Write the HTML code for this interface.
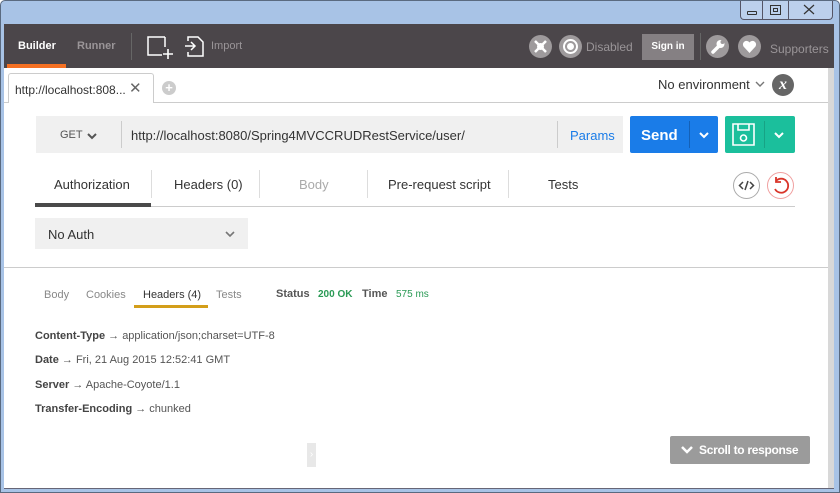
<!DOCTYPE html>
<html><head><meta charset="utf-8"><style>
*{box-sizing:border-box;margin:0;padding:0}
body{width:840px;height:493px;overflow:hidden;font-family:"Liberation Sans",sans-serif;background:#fff;position:relative}
.a{position:absolute;white-space:nowrap}
</style></head><body>
<div class="a" style="left:0;top:0;width:840px;height:493px;background:#a8c3e6;border:1px solid #5a6a80;border-radius:5px 5px 0 0"></div>
<div class="a" style="left:4px;top:24px;width:830px;height:465px;background:#fff;border-bottom:1px solid #667"></div>
<div class="a" style="left:828px;top:68px;width:6px;height:420px;background:#d8d8d8"></div>
<div class="a" style="left:740px;top:1px;width:93px;height:19px;border:1px solid #556;border-top:none;border-radius:0 0 4px 4px;background:#bcd0ec"></div>
<div class="a" style="left:762px;top:1px;width:1px;height:18px;background:#556"></div>
<div class="a" style="left:788px;top:1px;width:1px;height:18px;background:#556"></div>
<div class="a" style="left:747px;top:11px;width:10px;height:4px;border:1px solid #333;border-radius:1px"></div>
<div class="a" style="left:770px;top:5px;width:11px;height:10px;border:1px solid #333"></div>
<div class="a" style="left:773px;top:8px;width:5px;height:4px;border:1px solid #333"></div>
<svg class="a" style="left:803px;top:4px" width="12" height="11"><path d="M1 1l10 9M11 1L1 10" stroke="#333" stroke-width="1.2"/></svg>
<div class="a" style="left:4px;top:24px;width:830px;height:44px;background:#4b464a"></div>
<div class="a" style="left:18px;top:40px;font-size:11px;font-weight:bold;color:#fff">Builder</div>
<div class="a" style="left:77px;top:40px;font-size:11px;font-weight:bold;color:#9a9598">Runner</div>
<div class="a" style="left:7px;top:64px;width:59px;height:4px;background:#f47023"></div>
<div class="a" style="left:131px;top:33px;width:1px;height:27px;background:#666"></div>
<svg class="a" style="left:145px;top:34px" width="30" height="28"><path d="M20 3H3v18h14M20 3v10" fill="none" stroke="#fff" stroke-width="1.5"/><path d="M23 15v10M18 20h10" stroke="#fff" stroke-width="1.6"/></svg>
<svg class="a" style="left:184px;top:34px" width="22" height="26"><path d="M4 7V3h10l5 5v14H4v-4" fill="none" stroke="#fff" stroke-width="1.5"/><path d="M1 12h9M7 8l4 4-4 4" fill="none" stroke="#fff" stroke-width="1.5"/></svg>
<div class="a" style="left:211px;top:40px;font-size:11px;color:#9a9598">Import</div>
<div class="a" style="left:529px;top:35px;width:23px;height:23px;border-radius:50%;background:#9e9a9c"></div>
<svg class="a" style="left:529px;top:35px" width="23" height="23"><circle cx="11.5" cy="11.5" r="3.5" fill="#fff"/><path d="M6 6l11 11M17 6L6 17" stroke="#fff" stroke-width="2.5"/></svg>
<div class="a" style="left:559px;top:35px;width:23px;height:23px;border-radius:50%;background:#9e9a9c"></div>
<div class="a" style="left:563px;top:39px;width:15px;height:15px;border-radius:50%;border:2px solid #fff"></div>
<div class="a" style="left:567px;top:43px;width:7px;height:7px;border-radius:50%;background:#fff"></div>
<div class="a" style="left:586px;top:40px;font-size:12px;color:#9a9598">Disabled</div>
<div class="a" style="left:642px;top:34px;width:52px;height:26px;background:#858083;color:#fff;font-size:10px;font-weight:bold;text-align:center;line-height:26px">Sign in</div>
<div class="a" style="left:700px;top:33px;width:1px;height:27px;background:#666"></div>
<div class="a" style="left:706px;top:35px;width:23px;height:23px;border-radius:50%;background:#9e9a9c"></div>
<svg class="a" style="left:706px;top:35px" width="23" height="23"><path d="M7 17l6-6" stroke="#fff" stroke-width="3.5" stroke-linecap="round"/><circle cx="14.5" cy="9" r="4" fill="#fff"/><circle cx="16.5" cy="7" r="2" fill="#9e9a9c"/></svg>
<div class="a" style="left:738px;top:35px;width:23px;height:23px;border-radius:50%;background:#9e9a9c"></div>
<svg class="a" style="left:738px;top:35px" width="23" height="23"><path d="M11.5 18L5.5 11.5a3.3 3.3 0 0 1 6-4 3.3 3.3 0 0 1 6 4z" fill="#fff"/></svg>
<div class="a" style="left:770px;top:42px;font-size:12px;color:#9a9598">Supporters</div>
<div class="a" style="left:4px;top:102px;width:824px;height:1px;background:#ccc"></div>
<div class="a" style="left:8px;top:73px;width:146px;height:30px;background:#fff;border:1px solid #ccc;border-bottom:none;border-radius:3px 3px 0 0"></div>
<div class="a" style="left:15px;top:83px;font-size:12px;color:#333">http://localhost:808...</div>
<div class="a" style="left:129px;top:79px;font-size:15px;color:#666">✕</div>
<div class="a" style="left:162px;top:81px;width:14px;height:14px;border-radius:50%;background:#ccc;color:#fff;font-size:13px;font-weight:bold;text-align:center;line-height:14px">+</div>
<div class="a" style="left:658px;top:77px;font-size:13px;color:#333">No environment</div>
<svg class="a" style="left:755px;top:81px" width="10" height="7"><path d="M1 1l4 4 4-4" fill="none" stroke="#777" stroke-width="1.4"/></svg>
<div class="a" style="left:772px;top:74px;width:22px;height:22px;border-radius:50%;background:#666;color:#fff;font-family:'Liberation Serif',serif;font-style:italic;font-weight:bold;font-size:16px;text-align:center;line-height:21px">x</div>
<div class="a" style="left:36px;top:116px;width:587px;height:37px;background:#f0f0f0"></div>
<div class="a" style="left:60px;top:129px;font-size:11px;color:#555">GET</div>
<svg class="a" style="left:86px;top:132px" width="12" height="8"><path d="M2 2l4 4 4-4" fill="none" stroke="#555" stroke-width="2"/></svg>
<div class="a" style="left:121px;top:121px;width:1px;height:27px;background:#ccc"></div>
<div class="a" style="left:131px;top:128px;font-size:13px;color:#333">http://localhost:8080/Spring4MVCCRUDRestService/user/</div>
<div class="a" style="left:557px;top:121px;width:1px;height:27px;background:#ccc"></div>
<div class="a" style="left:570px;top:128px;font-size:13px;color:#1a7ce8">Params</div>
<div class="a" style="left:630px;top:116px;width:88px;height:37px;background:#1a7ce8;border-radius:2px"></div>
<div class="a" style="left:641px;top:127px;font-size:15px;font-weight:bold;color:#fff">Send</div>
<div class="a" style="left:689px;top:121px;width:1px;height:27px;background:#1461b8"></div>
<svg class="a" style="left:698px;top:131px" width="12" height="8"><path d="M2 2l4 4 4-4" fill="none" stroke="#fff" stroke-width="2"/></svg>
<div class="a" style="left:725px;top:116px;width:70px;height:37px;background:#1bbf9c;border-radius:2px"></div>
<svg class="a" style="left:731px;top:122px" width="25" height="25"><path d="M2 2h21v21H2z" fill="none" stroke="#fff" stroke-width="1.6"/><path d="M7 2v6h11V2" fill="none" stroke="#fff" stroke-width="1.6"/><circle cx="12.5" cy="16" r="3" fill="none" stroke="#fff" stroke-width="1.6"/></svg>
<div class="a" style="left:764px;top:121px;width:1px;height:27px;background:#17a385"></div>
<svg class="a" style="left:773px;top:131px" width="12" height="8"><path d="M2 2l4 4 4-4" fill="none" stroke="#fff" stroke-width="2"/></svg>
<div class="a" style="left:54px;top:177px;font-size:13px;color:#333">Authorization</div>
<div class="a" style="left:151px;top:170px;width:1px;height:28px;background:#ddd"></div>
<div class="a" style="left:174px;top:177px;font-size:13px;color:#333">Headers (0)</div>
<div class="a" style="left:259px;top:170px;width:1px;height:28px;background:#ddd"></div>
<div class="a" style="left:299px;top:177px;font-size:13px;color:#aaa">Body</div>
<div class="a" style="left:367px;top:170px;width:1px;height:28px;background:#ddd"></div>
<div class="a" style="left:388px;top:177px;font-size:13px;color:#333">Pre-request script</div>
<div class="a" style="left:508px;top:170px;width:1px;height:28px;background:#ddd"></div>
<div class="a" style="left:548px;top:177px;font-size:13px;color:#333">Tests</div>
<div class="a" style="left:35px;top:206px;width:760px;height:1px;background:#ccc"></div>
<div class="a" style="left:35px;top:203px;width:116px;height:4px;background:#4a4a4a"></div>
<div class="a" style="left:733px;top:172px;width:27px;height:27px;border-radius:50%;border:1.5px solid #aaa"></div>
<svg class="a" style="left:733px;top:172px" width="27" height="27"><path d="M10 10l-3.5 3.5L10 17M17 10l3.5 3.5L17 17M15 9l-3 9" fill="none" stroke="#444" stroke-width="1.5"/></svg>
<div class="a" style="left:767px;top:172px;width:27px;height:27px;border-radius:50%;border:1.5px solid #f0a0a0"></div>
<svg class="a" style="left:767px;top:172px" width="27" height="27"><path d="M9 9a7 7 0 1 1-1 8" fill="none" stroke="#d9352a" stroke-width="1.8"/><path d="M9 5v5h5" fill="none" stroke="#d9352a" stroke-width="1.8"/></svg>
<div class="a" style="left:35px;top:218px;width:213px;height:31px;background:#f0f0f0"></div>
<div class="a" style="left:48px;top:227px;font-size:13px;color:#333">No Auth</div>
<svg class="a" style="left:224px;top:230px" width="12" height="8"><path d="M2 2l4 4 4-4" fill="none" stroke="#777" stroke-width="1.6"/></svg>
<div class="a" style="left:4px;top:267px;width:824px;height:1px;background:#ccc"></div>
<div class="a" style="left:44px;top:289px;font-size:11px;color:#888">Body</div>
<div class="a" style="left:86px;top:289px;font-size:11px;color:#888">Cookies</div>
<div class="a" style="left:143px;top:289px;font-size:11px;color:#333">Headers (4)</div>
<div class="a" style="left:134px;top:305px;width:74px;height:3px;background:#d39e1a"></div>
<div class="a" style="left:216px;top:289px;font-size:11px;color:#888">Tests</div>
<div class="a" style="left:276px;top:288px;font-size:11px;font-weight:bold;color:#555">Status</div>
<div class="a" style="left:318px;top:289px;font-size:10px;font-weight:bold;color:#2a9a55">200 OK</div>
<div class="a" style="left:362px;top:288px;font-size:11px;font-weight:bold;color:#555">Time</div>
<div class="a" style="left:396px;top:289px;font-size:10px;color:#2a9a55">575 ms</div>
<div class="a" style="left:35px;top:330px;font-size:11px;color:#555"><b style="color:#444">Content-Type</b> → application/json;charset=UTF-8</div>
<div class="a" style="left:35px;top:354px;font-size:11px;color:#555"><b style="color:#444">Date</b> → Fri, 21 Aug 2015 12:52:41 GMT</div>
<div class="a" style="left:35px;top:379px;font-size:11px;color:#555"><b style="color:#444">Server</b> → Apache-Coyote/1.1</div>
<div class="a" style="left:35px;top:403px;font-size:11px;color:#555"><b style="color:#444">Transfer-Encoding</b> → chunked</div>
<div class="a" style="left:307px;top:443px;width:9px;height:24px;background:#e8e8e8;color:#fff;font-size:10px;line-height:24px;text-align:center">›</div>
<div class="a" style="left:670px;top:436px;width:140px;height:28px;background:#9b9b9b;border-radius:2px"></div>
<svg class="a" style="left:680px;top:445px" width="14" height="10"><path d="M2 2l5 5 5-5" fill="none" stroke="#fff" stroke-width="2.5"/></svg>
<div class="a" style="left:699px;top:443px;font-size:12px;font-weight:bold;color:#fff;letter-spacing:-0.3px">Scroll to response</div>
</body></html>
